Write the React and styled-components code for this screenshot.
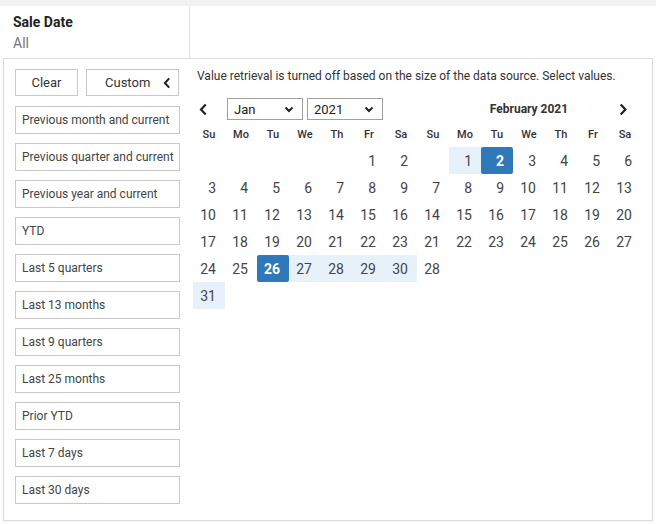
import React from 'react'
import styled, { createGlobalStyle } from 'styled-components'

const Global = createGlobalStyle`
  html, body {
    margin: 0;
    padding: 0;
  }
  body {
    background: linear-gradient(#f1f1f1 0 6px, #ffffff 6px);
    font-family: Roboto, "Liberation Sans", Arial, sans-serif;
    color: #333;
  }
`

const Page = styled.div`
  width: 656px;
  height: 524px;
  padding: 6px 0 0 3px;
  box-sizing: border-box;
  overflow: hidden;
`

const Header = styled.div`
  display: flex;
  height: 52px;
  background: #fff;
`

const FieldCell = styled.div`
  width: 187px;
  box-sizing: border-box;
  padding: 7px 10px 0;
  border-right: 1px solid #e3e3e3;
`

const FieldName = styled.div`
  font-size: 14px;
  font-weight: 700;
  line-height: 18px;
  color: #222;
`

const FieldValue = styled.div`
  font-size: 14px;
  line-height: 20px;
  margin-top: 2px;
  color: #777;
`

const Popup = styled.div`
  width: 650px;
  height: 463px;
  box-sizing: border-box;
  border: 1px solid #dcdcdc;
  background: #fff;
  display: flex;
  box-shadow: 0 1px 2px rgba(0, 0, 0, 0.05);
`

const Presets = styled.div`
  width: 189px;
  box-sizing: border-box;
  padding: 10px 0 0 11px;
  display: flex;
  flex-direction: column;
`

const ButtonRow = styled.div`
  display: flex;
  gap: 8px;
  margin-bottom: 10px;
`

const Button = styled.div`
  height: 27px;
  box-sizing: border-box;
  border: 1px solid #c8c8c8;
  background: #fff;
  display: flex;
  align-items: center;
  justify-content: ${p => (p.$split ? 'space-between' : 'center')};
  padding: ${p => (p.$split ? '0 7px 0 18px' : '0')};
  width: ${p => p.$w}px;
  font-size: 13px;
  color: #333;
`

const PresetList = styled.div`
  display: flex;
  flex-direction: column;
  gap: 9px;
`

const Preset = styled.div`
  width: 165px;
  height: 28px;
  box-sizing: border-box;
  border: 1px solid #c8c8c8;
  padding-left: 6px;
  display: flex;
  align-items: center;
  font-size: 12px;
  color: #444;
`

const CalendarPane = styled.div`
  padding-top: 9px;
  display: flex;
  flex-direction: column;
`

const Message = styled.div`
  font-size: 12px;
  line-height: 16px;
  color: #333;
  padding-left: 4px;
  white-space: nowrap;
`

const Months = styled.div`
  display: flex;
  margin-top: 14px;
`

const Month = styled.div`
  width: 224px;
  display: flex;
  flex-direction: column;
`

const Nav = styled.div`
  height: 22px;
  display: grid;
  grid-template-columns: ${p => (p.$right ? '22px 1fr 22px' : '30px 76px 76px')};
  column-gap: ${p => (p.$right ? '0' : '4px')};
  align-items: center;
`

const Arrow = styled.div`
  display: flex;
  align-items: center;
  justify-content: flex-start;
  padding-left: ${p => (p.$end ? '0' : '6px')};
  height: 22px;
`

const Select = styled.div`
  height: 22px;
  box-sizing: border-box;
  border: 1px solid #a0a0a0;
  display: flex;
  align-items: center;
  justify-content: space-between;
  padding: 0 8px 0 6px;
  font-size: 13px;
  color: #222;
`

const MonthTitle = styled.div`
  text-align: center;
  font-size: 12px;
  font-weight: 700;
  color: #333;
`

const Grid = styled.div`
  display: grid;
  grid-template-columns: repeat(7, 32px);
  grid-auto-rows: 27px;
`

const DayName = styled.div`
  height: 29px;
  display: flex;
  align-items: center;
  justify-content: center;
  font-size: 11px;
  font-weight: 500;
  color: #333;
`

const Day = styled.div`
  display: flex;
  align-items: center;
  justify-content: flex-end;
  padding-right: 9px;
  font-size: 14px;
  color: ${p => (p.$sel ? '#fff' : '#444')};
  font-weight: ${p => (p.$sel ? 700 : 400)};
  background: ${p => (p.$sel ? '#2f79bb' : p.$range ? '#e7f1f9' : 'transparent')};
  border-radius: ${p => (p.$sel ? '2px' : '0')};
`

const Chevron = ({ dir = 'left', size = 13 }) => (
  <svg width={size * 0.65} height={size} viewBox="0 0 8 13">
    <polyline
      points={dir === 'left' ? '6.5,1.5 1.8,6.5 6.5,11.5' : '1.5,1.5 6.2,6.5 1.5,11.5'}
      fill="none"
      stroke="#222"
      strokeWidth="2.2"
    />
  </svg>
)

const Caret = () => (
  <svg width="10" height="7" viewBox="0 0 10 7">
    <polyline points="1.5,1.5 5,5 8.5,1.5" fill="none" stroke="#222" strokeWidth="2" />
  </svg>
)

const presets = [
  'Previous month and current',
  'Previous quarter and current',
  'Previous year and current',
  'YTD',
  'Last 5 quarters',
  'Last 13 months',
  'Last 9 quarters',
  'Last 25 months',
  'Prior YTD',
  'Last 7 days',
  'Last 30 days'
]

const dayNames = ['Su', 'Mo', 'Tu', 'We', 'Th', 'Fr', 'Sa']

// jan 2021 starts friday, feb 2021 starts monday
const janDays = Array.from({ length: 5 }, () => null).concat(
  Array.from({ length: 31 }, (_, i) => i + 1)
)
const febDays = [null].concat(Array.from({ length: 28 }, (_, i) => i + 1))

function MonthGrid({ days, sel, range }) {
  return (
    <Grid>
      {dayNames.map(d => (
        <DayName key={d}>{d}</DayName>
      ))}
      {days.map((d, i) => (
        <Day key={i} $sel={d === sel} $range={d != null && range(d)}>
          {d}
        </Day>
      ))}
    </Grid>
  )
}

export default function App() {
  return (
    <Page>
      <Global />
      <Header>
        <FieldCell>
          <FieldName>Sale Date</FieldName>
          <FieldValue>All</FieldValue>
        </FieldCell>
      </Header>
      <Popup>
        <Presets>
          <ButtonRow>
            <Button $w={63}>Clear</Button>
            <Button $w={93} $split>
              <span>Custom</span>
              <Chevron dir="left" size={12} />
            </Button>
          </ButtonRow>
          <PresetList>
            {presets.map(p => (
              <Preset key={p}>{p}</Preset>
            ))}
          </PresetList>
        </Presets>
        <CalendarPane>
          <Message>
            Value retrieval is turned off based on the size of the data source. Select values.
          </Message>
          <Months>
            <Month>
              <Nav>
                <Arrow>
                  <Chevron dir="left" />
                </Arrow>
                <Select>
                  <span>Jan</span>
                  <Caret />
                </Select>
                <Select>
                  <span>2021</span>
                  <Caret />
                </Select>
              </Nav>
              <MonthGrid days={janDays} sel={26} range={d => d > 26} />
            </Month>
            <Month>
              <Nav $right>
                <span />
                <MonthTitle>February 2021</MonthTitle>
                <Arrow $end>
                  <Chevron dir="right" />
                </Arrow>
              </Nav>
              <MonthGrid days={febDays} sel={2} range={d => d < 2} />
            </Month>
          </Months>
        </CalendarPane>
      </Popup>
    </Page>
  )
}
